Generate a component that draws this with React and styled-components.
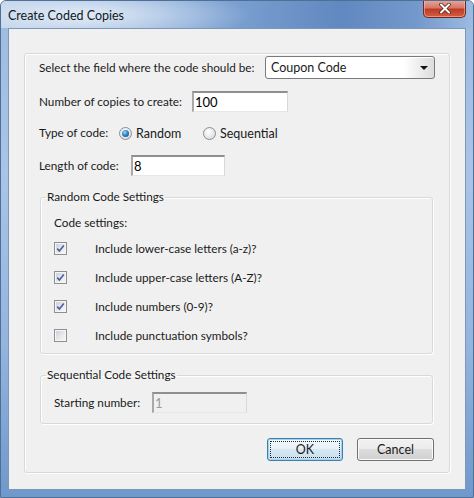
import React from "react";
import styled, { createGlobalStyle } from "styled-components";

const GlobalStyle = createGlobalStyle`
  html, body {
    margin: 0;
    padding: 0;
    background: #ffffff;
  }
  body {
    font-family: Lato, "Noto Sans", sans-serif;
    font-size: 11.75px;
    color: #1a1a1a;
  }
`;

const Frame = styled.div`
  width: 474px;
  height: 498px;
  box-sizing: border-box;
  display: flex;
  flex-direction: column;
  border: 1px solid #4f6f95;
  border-radius: 6px 6px 0 0;
  background: linear-gradient(180deg, #9dbae0 0%, #a9c4e6 35%, #93b4de 70%, #6f98cc 100%);
  overflow: hidden;
`;

const TitleBar = styled.div`
  height: 27px;
  flex-shrink: 0;
  display: flex;
  justify-content: space-between;
  align-items: flex-start;
  padding-left: 7px;
  background:
    radial-gradient(ellipse 170px 30px at 80px 14px, rgba(230, 238, 248, 0.95) 0%, rgba(230, 238, 248, 0) 100%),
    linear-gradient(90deg, #b7cce8 0%, #84a8d6 40%, #6188c0 72%, #7398cb 88%, #9dbbe2 100%);
`;

const Title = styled.span`
  margin-top: 7px;
  font-size: 12.5px;
  line-height: 16px;
  color: #101820;
`;

const CloseButton = styled.div`
  width: 43px;
  height: 18px;
  margin-right: 7px;
  margin-top: -1px;
  box-sizing: border-box;
  display: flex;
  align-items: center;
  justify-content: center;
  border: 1px solid #6e2a20;
  border-top: none;
  border-radius: 0 0 5px 5px;
  background: linear-gradient(180deg, #e9a99b 0%, #d67866 45%, #c0392a 55%, #d2603e 100%);
  box-shadow: inset 0 0 0 1px rgba(255, 200, 190, 0.5);
`;

const Client = styled.div`
  flex: 1;
  margin: 0 7px 7px 7px;
  box-sizing: border-box;
  display: flex;
  flex-direction: column;
  padding: 24px 15px 16px 15px;
  background: #f0f0f0;
  border: 1px solid #7f97b6;
`;

const Panel = styled.div`
  flex: 1;
  box-sizing: border-box;
  display: flex;
  flex-direction: column;
  padding: 2px 16px 0 14px;
  border: 1px solid #d5dadf;
  border-radius: 3px;
  box-shadow: inset 1px 1px 0 #ffffff, 1px 1px 0 #ffffff;
`;

const Row = styled.div`
  display: flex;
  align-items: center;
  height: ${(p) => p.$height || 21}px;
  margin-top: ${(p) => p.$top || 0}px;
`;

const Label = styled.span`
  width: ${(p) => p.$width}px;
  flex-shrink: 0;
  line-height: 16px;
  white-space: nowrap;
`;

const Select = styled.div`
  width: 170px;
  height: 23px;
  flex-shrink: 0;
  box-sizing: border-box;
  display: flex;
  align-items: center;
  justify-content: space-between;
  padding: 0 6px 0 5px;
  border: 1px solid #7a7a7a;
  border-radius: 3px;
  background: linear-gradient(90deg, #ffffff 0%, #ffffff 82%, #dcdcdc 100%);
  box-shadow: inset 0 1px 0 #ffffff;
  font-size: 12.5px;
`;

const Arrow = styled.span`
  width: 0;
  height: 0;
  border-left: 4px solid transparent;
  border-right: 4px solid transparent;
  border-top: 4px solid #111;
`;

const TextInput = styled.div`
  width: ${(p) => p.$width}px;
  height: 21px;
  flex-shrink: 0;
  box-sizing: border-box;
  display: flex;
  align-items: center;
  padding-left: 1px;
  border-style: solid;
  border-width: 2px 1px 1px 2px;
  border-color: #8f8f8f #d8d8d8 #e6e6e6 #a8a8a8;
  background: ${(p) => (p.$disabled ? "#f0f0f0" : "#ffffff")};
  color: ${(p) => (p.$disabled ? "#9a9a9a" : "#000")};
  font-size: 13px;
`;

const RadioOption = styled.label`
  width: ${(p) => p.$width || "auto"}px;
  display: flex;
  align-items: center;
  gap: 4px;
  font-size: 12.5px;
`;

const RadioDot = styled.span`
  width: 13px;
  height: 13px;
  box-sizing: border-box;
  border-radius: 50%;
  border: 1px solid #8a8e92;
  display: flex;
  align-items: center;
  justify-content: center;
  background: radial-gradient(circle at 40% 35%, #ffffff 0%, #e4e6e9 60%, #c9ccd0 100%);

  &::after {
    content: "";
    display: ${(p) => (p.$checked ? "block" : "none")};
    width: 7px;
    height: 7px;
    border-radius: 50%;
    background: radial-gradient(circle at 40% 35%, #9fdcfb 0%, #2f86c7 45%, #0d3f70 100%);
  }
`;

const Group = styled.fieldset`
  margin: ${(p) => p.$top}px 0 0 1px;
  padding: 0;
  min-width: 0;
  border: 1px solid #d5dadf;
  border-radius: 3px;
  box-shadow: inset 1px 1px 0 #ffffff, 1px 1px 0 #ffffff;
`;

const Legend = styled.legend`
  margin-left: 5px;
  padding: 0 1px;
  line-height: 16px;
`;

const GroupBody = styled.div`
  display: flex;
  flex-direction: column;
  padding: ${(p) => p.$top}px 0 ${(p) => p.$bottom}px 13px;
`;

const SubHeading = styled.div`
  line-height: 16px;
  margin-bottom: 3px;
`;

const CheckRow = styled.label`
  height: 29px;
  display: flex;
  align-items: center;
  gap: 28px;
`;

const CheckBox = styled.span`
  width: 13px;
  height: 13px;
  flex-shrink: 0;
  box-sizing: border-box;
  display: flex;
  align-items: center;
  justify-content: center;
  border: 1px solid #8e8f8f;
  box-shadow: inset 0 0 0 1px #f6f6f6;
  background: linear-gradient(135deg, #c9ced5 0%, #e9ebee 60%, #f7f7f7 100%);
`;

const ButtonRow = styled.div`
  display: flex;
  justify-content: flex-end;
  gap: 14px;
  margin: 14px -1px 0 0;
`;

const Button = styled.div`
  position: relative;
  width: ${(p) => p.$width}px;
  height: 23px;
  box-sizing: border-box;
  display: flex;
  align-items: center;
  justify-content: center;
  border: 1px solid ${(p) => (p.$default ? "#3c7fb1" : "#707070")};
  border-radius: 3px;
  background: ${(p) =>
    p.$default
      ? "linear-gradient(180deg, #f3f8fb 0%, #e7f1f8 50%, #d7e8f3 50%, #c9def0 100%)"
      : "linear-gradient(180deg, #f2f2f2 0%, #ebebeb 50%, #dddddd 50%, #cfcfcf 100%)"};
  box-shadow: inset 0 0 0 1px ${(p) => (p.$default ? "#9fd2ef" : "#fbfbfb")};
  font-size: 12.5px;

  &::after {
    content: "";
    display: ${(p) => (p.$default ? "block" : "none")};
    position: absolute;
    inset: 2px;
    border: 1px dotted #2a2a2a;
  }
`;

function Check() {
  return (
    <svg width="9" height="9" viewBox="0 0 9 9">
      <path d="M1.2 4.6 L3.4 7 L7.8 1.4" fill="none" stroke="#4a5fa3" strokeWidth="1.6" />
    </svg>
  );
}

function CloseGlyph() {
  return (
    <svg width="12" height="11" viewBox="0 0 12 11">
      <path d="M2 1.5 L10 9.5 M10 1.5 L2 9.5" stroke="#5a2418" strokeWidth="3.6" strokeLinecap="round" />
      <path d="M2 1.5 L10 9.5 M10 1.5 L2 9.5" stroke="#ffffff" strokeWidth="2" strokeLinecap="round" />
    </svg>
  );
}

const OPTIONS = [
  { text: "Include lower-case letters (a-z)?", checked: true },
  { text: "Include upper-case letters (A-Z)?", checked: true },
  { text: "Include numbers (0-9)?", checked: true },
  { text: "Include punctuation symbols?", checked: false },
];

export default function App() {
  return (
    <>
      <GlobalStyle />
      <Frame>
        <TitleBar>
          <Title>Create Coded Copies</Title>
          <CloseButton>
            <CloseGlyph />
          </CloseButton>
        </TitleBar>
        <Client>
          <Panel>
            <Row $height={23}>
              <Label $width={226}>Select the field where the code should be:</Label>
              <Select>
                <span>Coupon Code</span>
                <Arrow />
              </Select>
            </Row>
            <Row $top={12}>
              <Label $width={153}>Number of copies to create:</Label>
              <TextInput $width={96}>100</TextInput>
            </Row>
            <Row $top={11} $height={20}>
              <Label $width={80}>Type of code:</Label>
              <RadioOption $width={84}>
                <RadioDot $checked />
                Random
              </RadioOption>
              <RadioOption>
                <RadioDot />
                Sequential
              </RadioOption>
            </Row>
            <Row $top={12}>
              <Label $width={92}>Length of code:</Label>
              <TextInput $width={94}>8</TextInput>
            </Row>

            <Group $top={13}>
              <Legend>Random Code Settings</Legend>
              <GroupBody $top={10} $bottom={3}>
                <SubHeading>Code settings:</SubHeading>
                {OPTIONS.map((o) => (
                  <CheckRow key={o.text}>
                    <CheckBox>{o.checked && <Check />}</CheckBox>
                    {o.text}
                  </CheckRow>
                ))}
              </GroupBody>
            </Group>

            <Group $top={13}>
              <Legend>Sequential Code Settings</Legend>
              <GroupBody $top={9} $bottom={10}>
                <Row>
                  <Label $width={98}>Starting number:</Label>
                  <TextInput $width={95} $disabled>
                    1
                  </TextInput>
                </Row>
              </GroupBody>
            </Group>

            <ButtonRow>
              <Button $width={76} $default>
                OK
              </Button>
              <Button $width={77}>Cancel</Button>
            </ButtonRow>
          </Panel>
        </Client>
      </Frame>
    </>
  );
}
